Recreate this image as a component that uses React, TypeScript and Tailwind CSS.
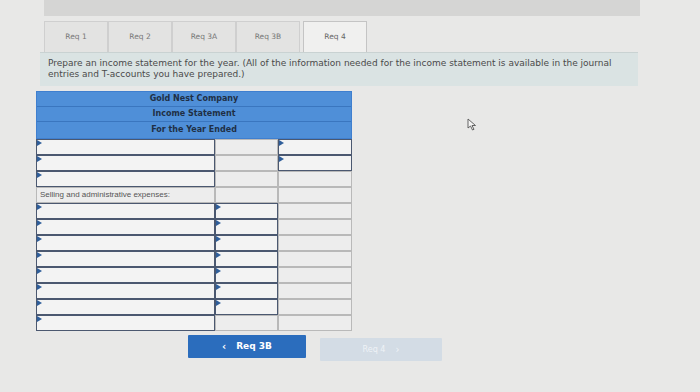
import React from "react";

const TABS = ["Req 1", "Req 2", "Req 3A", "Req 3B", "Req 4"];

type Kind = "in" | "plain";
type Row = { label?: string; cells: [Kind, Kind, Kind] };

const ROWS: Row[] = [
  { cells: ["in", "plain", "in"] },
  { cells: ["in", "plain", "in"] },
  { cells: ["in", "plain", "plain"] },
  { label: "Selling and administrative expenses:", cells: ["plain", "plain", "plain"] },
  ...Array.from({ length: 7 }, () => ({ cells: ["in", "in", "plain"] as [Kind, Kind, Kind] })),
  { cells: ["in", "plain", "plain"] },
];

function Cell({ kind, label }: { kind: Kind; label?: string }) {
  if (kind === "in") {
    return (
      <div className="relative h-[16px] border-[1.5px] border-[#4b5870] bg-[#f3f3f3]">
        <span className="absolute left-0 top-0 h-0 w-0 border-y-[3px] border-l-[5px] border-y-transparent border-l-[#2f5e9a]" />
      </div>
    );
  }
  return (
    <div className="flex h-[16px] items-center border border-[#b9b9b9] bg-[#ededed] px-[3px] font-['Liberation_Sans',Arial,sans-serif] text-[8px] text-[#555]">
      {label}
    </div>
  );
}

export default function App() {
  return (
    <div className="relative h-[392px] w-[700px] overflow-hidden bg-[#e8e8e7] font-['DejaVu_Sans',Verdana,sans-serif]">
      <div className="ml-[44px] h-[16px] w-[596px] bg-[#d5d5d4]" />

      <div className="ml-[40px] w-[598px]">
        {/* tabs */}
        <div className="mt-[5px] flex pl-[4px]">
          {TABS.map((t, i) => (
            <div
              key={t}
              className={
                i === 4
                  ? "ml-[3px] flex h-[31px] w-[64px] items-center justify-center border border-b-0 border-[#c4c4c4] bg-[#f0f0ef] text-[7.5px] text-[#666]"
                  : "flex h-[31px] w-[64px] items-center justify-center border border-b-0 border-[#cfcfcf] bg-[#e3e3e2] text-[7.5px] text-[#777]"
              }
            >
              {t}
            </div>
          ))}
        </div>

        {/* instructions */}
        <div className="border-t border-[#c9d2d2] bg-[#dae3e3] px-[8px] pb-[6px] pt-[5px] text-[9px] leading-[11px] text-[#4a4a4a]">
          Prepare an income statement for the year. (All of the information needed for the income statement is available in the journal
          entries and T-accounts you have prepared.)
        </div>

        {/* table */}
        <div className="ml-[-4px] mt-[5px] w-[316px] bg-[#f0f0f0]">
          <div className="border border-[#3f7fcf] bg-[#4f8fd8] text-center text-[8px] font-bold text-[#1f2f45]">
            <div className="flex h-[15px] items-center justify-center border-b border-[#3a76bf]">Gold Nest Company</div>
            <div className="flex h-[15px] items-center justify-center border-b border-[#3a76bf]">Income Statement</div>
            <div className="flex h-[16px] items-center justify-center">For the Year Ended</div>
          </div>
          <div className="grid grid-cols-[179px_63px_74px]">
            {ROWS.map((r, ri) => (
              <React.Fragment key={ri}>
                <Cell kind={r.cells[0]} label={r.label} />
                <Cell kind={r.cells[1]} />
                <Cell kind={r.cells[2]} />
              </React.Fragment>
            ))}
          </div>
        </div>
      </div>

      {/* nav buttons */}
      <div className="mt-[4px] flex items-start gap-[14px] pl-[188px]">
        <button className="flex h-[23px] w-[118px] items-center justify-center gap-[10px] rounded-[1px] bg-[#2b6dbd] text-[9px] font-bold text-white">
          <span className="text-[10px]">&lsaquo;</span>
          <span>Req 3B</span>
        </button>
        <button className="mt-[3px] flex h-[23px] w-[122px] items-center justify-center gap-[10px] rounded-[1px] bg-[#d3dce5] text-[8px] text-[#eef2f6]">
          <span>Req 4</span>
          <span className="text-[10px]">&rsaquo;</span>
        </button>
      </div>

      {/* mouse cursor */}
      <svg className="absolute left-[467px] top-[118px]" width="10" height="13" viewBox="0 0 10 13">
        <path d="M1 1 L1 10 L3.5 8 L5.5 12 L7 11.3 L5 7.5 L8.5 7.5 Z" fill="#f4f4f4" stroke="#555" strokeWidth="0.9" />
      </svg>
    </div>
  );
}
